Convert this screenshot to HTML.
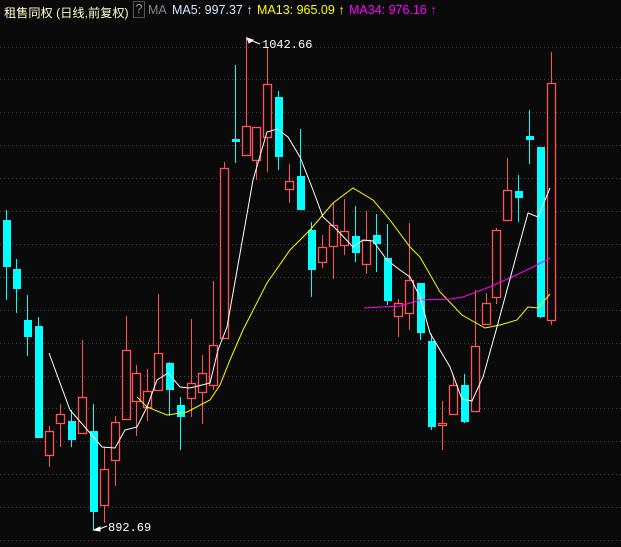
<!DOCTYPE html>
<html><head><meta charset="utf-8"><style>
html,body{margin:0;padding:0;background:#0a0a0a;width:621px;height:547px;overflow:hidden}
.h{position:absolute;top:3px;font:12.5px "Liberation Sans","Noto Sans CJK SC",sans-serif;white-space:nowrap}
</style></head><body>
<div class="h" style="left:4px;color:#ffffd0;font-size:12.2px;top:3px">租售同权 (日线,前复权)</div>
<div class="h" style="left:133px;top:1px;width:10px;height:15px;border:1px solid #555;color:#999;text-align:center;line-height:15px">?</div>
<div class="h" style="left:148px;color:#888">MA</div>
<div class="h" style="left:172px;color:#d8e8ff">MA5: 997.37 ↑</div>
<div class="h" style="left:257px;color:#ffff00">MA13: 965.09 ↑</div>
<div class="h" style="left:349px;color:#ff00ff">MA34: 976.16 ↑</div>
<svg id="s" width="621" height="547" style="position:absolute;left:0;top:0" xmlns="http://www.w3.org/2000/svg">
<g id="grid" stroke="#4a4a4a" stroke-dasharray="1,3"></g>
<g id="c"></g>
<polyline fill="none" stroke="#ffff00" points="137,397 147,407 167,415 187,412 210,400 220,385 230,360 243,330 267,283 290,250 310,230 333,203 353,188 373,200 390,220 410,247 420,257 440,292 462,315 485,328 500,325 517,320 528,307 538,308 550,294"/>
<polyline fill="none" stroke="#ff00ff" points="364,308 400,306 420,300 450,299 463,297 487,288 510,278 533,267 550,258"/>
<polyline fill="none" stroke="#ffffff" points="49,353 70,410 90,433 102,447 115,448 125,430 137,427 147,407 157,380 168,373 180,387 190,388 210,383 218,350 227,327 253,180 267,132 277,129 288,137 300,157 313,190 323,217 337,230 353,247 363,240 373,241 387,260 400,270 410,277 420,297 430,333 450,367 462,399 472,401 483,377 497,327 517,253 528,213 538,217 550,188"/>
<path d="M247,38 l6,2 l-4,3 z M250,40 l10,4" stroke="#fff" fill="#fff"/>
<text x="262" y="48" fill="#fff" font-family="Liberation Mono,monospace" font-size="12">1042.66</text>
<path d="M94,530 l6,-3 l0,4 z M97,530 l10,-4" stroke="#fff" fill="#fff"/>
<text x="108" y="531" fill="#fff" font-family="Liberation Mono,monospace" font-size="12">892.69</text>
</svg>
<script>
var ns="http://www.w3.org/2000/svg",g=document.getElementById('grid');
for(var k=0;k<16;k++){var y=46.5+32.9*k,l=document.createElementNS(ns,'line');l.setAttribute('x1',0);l.setAttribute('x2',621);l.setAttribute('y1',Math.round(y)+.5);l.setAttribute('y2',Math.round(y)+.5);g.appendChild(l);}
var d=[['c',220,267,210,300],['c',269,289,259,313],['c',320,337,295,356],['c',326,438,317,438],['r',431,455,426,467],['r',414,423,404,447],['c',421,440,410,447],['r',397,433,340,433],['c',431,512,404,530],['r',469,505,447,523],['r',422,460,416,486],['r',350,419,316,419],['r',373,401,365,436],['r',391,407,369,421],['r',353,390,294,390],['c',363,390,362,416],['c',405,417,397,450],['r',383,398,319,417],['r',373,392,355,424],['r',345,385,281,390],['r',168,338,162,338],['c',139,142,65,163],['r',126,155,37,155],['r',127,160,127,180],['r',84,137,47,172],['c',97,157,91,170],['r',181,189,164,203],['c',176,210,129,210],['c',230,270,222,297],['r',247,262,235,268],['r',225,246,203,279],['r',231,245,199,255],['c',236,253,206,262],['r',240,264,211,274],['c',235,244,214,272],['c',258,301,224,305],['r',303,316,299,337],['r',280,313,223,330],['c',283,333,283,340],['c',341,427,334,430],['r',423,425,401,450],['r',385,414,375,414],['c',385,422,374,423],['r',346,411,290,411],['r',303,324,293,324],['r',230,297,228,304],['r',190,220,158,220],['c',191,198,175,222],['c',136,140,110,164],['c',147,317,147,318],['r',83,320,52,325]];
var c=document.getElementById('c'),h='';
d.forEach(function(a,i){var x=Math.round(5.5+10.91*i),col=a[0]=='r'?'#ff5555':'#00ffff';
h+='<line x1="'+(x+.5)+'" x2="'+(x+.5)+'" y1="'+a[3]+'" y2="'+a[4]+'" stroke="'+col+'"/>';
if(a[0]=='r')h+='<rect x="'+(x-3.5)+'" y="'+(a[1]+.5)+'" width="8" height="'+Math.max(1,a[2]-a[1])+'" fill="#0a0a0a" stroke="'+col+'" stroke-width="1.3"/>';
else h+='<rect x="'+(x-3)+'" y="'+a[1]+'" width="8" height="'+Math.max(2,a[2]-a[1])+'" fill="'+col+'"/>';});
c.innerHTML=h;
</script>
</body></html>
